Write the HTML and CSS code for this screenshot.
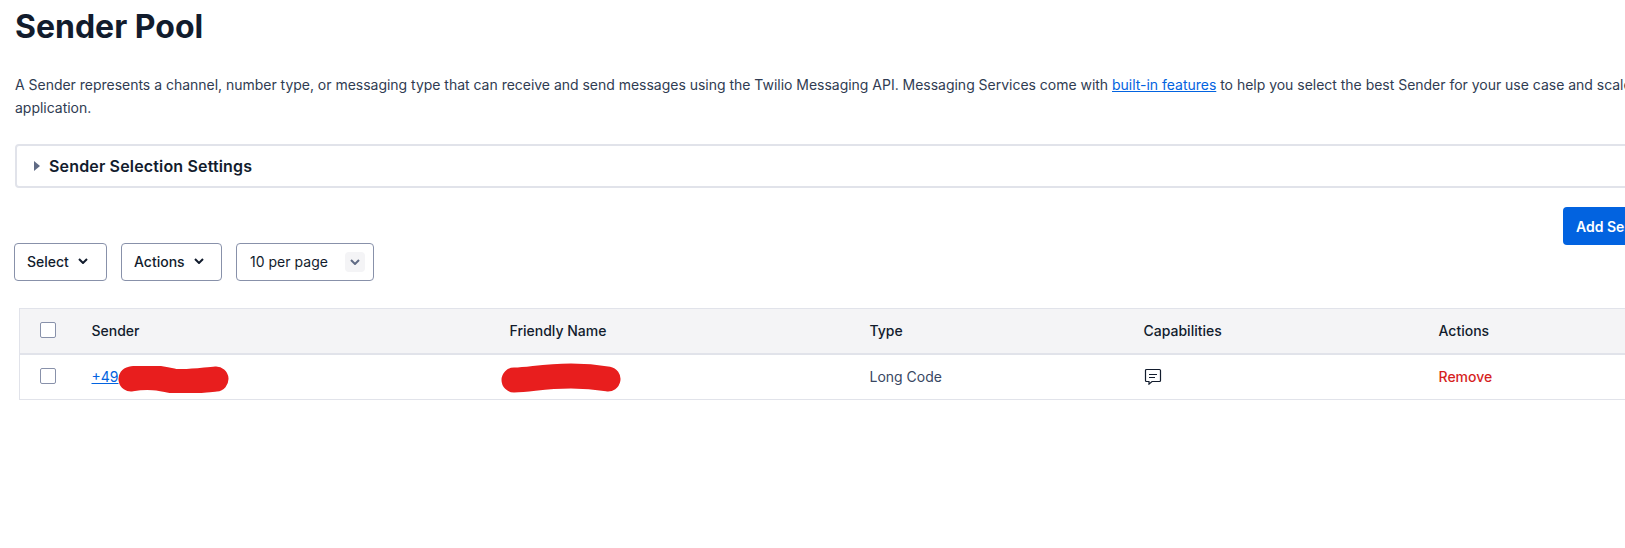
FILE: index.html
```html
<!DOCTYPE html>
<html lang="en">
<head>
<meta charset="utf-8">
<title>Sender Pool</title>
<link rel="stylesheet" href="styles.css">
</head>
<body>
<main class="page">
  <h1 class="title">Sender Pool</h1>
  <p class="intro">A Sender represents a channel, number type, or messaging type that can receive and send messages using the Twilio Messaging API. Messaging Services come with <a href="#" class="link">built-in features</a> to help you select the best Sender for your use case and scale your application.</p>
  <section class="disclosure">
    <svg class="disclosure-arrow" viewBox="0 0 6 10" aria-hidden="true"><path d="M0 0l6 5-6 5z"/></svg>
    <span class="disclosure-title">Sender Selection Settings</span>
  </section>
  <div class="add-row"><button class="primary">Add Sender</button></div>
  <div class="toolbar">
    <button class="menu select-menu">Select <svg class="chev" viewBox="0 0 10 6" aria-hidden="true"><path d="M1 1l4 4 4-4"/></svg></button>
    <button class="menu actions-menu">Actions <svg class="chev" viewBox="0 0 10 6" aria-hidden="true"><path d="M1 1l4 4 4-4"/></svg></button>
    <div class="per-page"><span class="per-page-label">10 per page</span><span class="caret-box"><svg class="chev muted" viewBox="0 0 10 6" aria-hidden="true"><path d="M1 1l4 4 4-4"/></svg></span></div>
  </div>
  <table class="table">
    <colgroup><col class="c1"><col class="c2"><col class="c3"><col class="c4"><col class="c5"><col></colgroup>
    <thead>
      <tr>
        <th><span class="check"></span></th>
        <th>Sender</th><th>Friendly Name</th><th>Type</th><th>Capabilities</th><th>Actions</th>
      </tr>
    </thead>
    <tbody>
      <tr>
        <td><span class="check"></span></td>
        <td class="redacted-cell"><a href="#" class="link">+49</a>
          <svg class="blob blob-one" viewBox="0 0 112 27" aria-hidden="true"><path d="M13 13C30 10 42 12 55 15C68 17 85 14 98 13" /></svg>
        </td>
        <td class="redacted-cell">
          <svg class="blob blob-two" viewBox="0 0 120 30" aria-hidden="true"><path d="M13 17C30 17 40 13 70 13C85 13 95 14 107 16" /></svg>
        </td>
        <td>Long Code</td>
        <td><svg class="msg" viewBox="0 0 18 18" aria-hidden="true"><path d="M2.5 2.5h13a1 1 0 0 1 1 1v10a1 1 0 0 1-1 1H8l-3 2.6v-2.6H2.5a1 1 0 0 1-1-1v-10a1 1 0 0 1 1-1z"/><path d="M5 7.5h8M5 10.5h6"/></svg></td>
        <td class="danger">Remove</td>
      </tr>
    </tbody>
  </table>
</main>
</body>
</html>
```

FILE: styles.css
```css
html, body {
  margin: 0;
  background: #fff;
  overflow: hidden;
}
body {
  width: 1625px;
  height: 548px;
  font-family: Inter, "Liberation Sans", sans-serif;
  color: #121c2d;
}
.page {
  width: 1960px;
  padding-left: 14px;
  box-sizing: border-box;
}
.title {
  margin: 7px 0 0 1px;
  font-size: 32px;
  line-height: 40px;
  font-weight: 700;
}
.intro {
  margin: 27px 0 0 1px;
  width: 1700px;
  font-size: 14px;
  line-height: 22.5px;
  letter-spacing: -0.019px;
  color: #303c52;
}
.link {
  color: #0263e0;
  text-decoration: underline;
}
.disclosure {
  margin: 25px 0 0 1px;
  height: 44px;
  box-sizing: border-box;
  border: 2px solid #e1e3ea;
  border-radius: 4px;
  display: flex;
  align-items: center;
  padding-left: 17px;
}
.disclosure-arrow {
  width: 6px;
  height: 10px;
  fill: #606b85;
  margin-right: 9px;
}
.disclosure-title {
  font-size: 16px;
  font-weight: 600;
  letter-spacing: 0.16px;
}
.add-row {
  margin-top: 19px;
  padding-left: 1549px;
  height: 38px;
}
.primary {
  height: 38px;
  width: 130px;
  border: 0;
  border-radius: 4px;
  background: #0263e0;
  color: #fff;
  font: 600 14px Inter, sans-serif;
  text-align: left;
  padding: 0 13px;
}
.toolbar {
  margin-top: -2px;
  display: flex;
  gap: 14px;
  height: 38px;
}
.menu, .per-page {
  height: 38px;
  box-sizing: border-box;
  border: 1px solid #8891aa;
  border-radius: 4px;
  background: #fff;
  color: #121c2d;
  font: 500 14px Inter, sans-serif;
  display: flex;
  align-items: center;
}
.menu {
  padding: 0 0 2px 12px;
  gap: 9px;
}
.select-menu { width: 93px; }
.actions-menu { width: 101px; }
.per-page {
  width: 138px;
  padding: 0 8px 0 13px;
  justify-content: space-between;
  font-weight: 400;
  letter-spacing: 0.02px;
}
.per-page-label { margin-bottom: 2px; }
.caret-box {
  width: 20px;
  height: 20px;
  border-radius: 4px;
  background: #f4f4f6;
  display: flex;
  align-items: center;
  justify-content: center;
}
.chev {
  width: 10px;
  height: 6px;
  fill: none;
  stroke: #121c2d;
  stroke-width: 2;
}
.chev.muted { stroke: #606b85; }
.table {
  margin: 27px 0 0 5px;
  width: 1900px;
  table-layout: fixed;
  border-collapse: collapse;
  font-size: 14px;
}
.c1 { width: 72px; }
.c2 { width: 418px; }
.c3 { width: 360px; }
.c4 { width: 274px; }
.c5 { width: 295px; }
.table th {
  height: 42px;
  padding: 0 0 2px;
  background: #f4f4f6;
  border-top: 1px solid #e1e3ea;
  border-bottom: 2px solid #e1e3ea;
  text-align: left;
  font-weight: 500;
  vertical-align: middle;
}
.table td {
  height: 42px;
  padding: 0 0 2px;
  border-bottom: 1px solid #e1e3ea;
  color: #394762;
  vertical-align: middle;
}
.table tr > :first-child {
  border-left: 1px solid #e1e3ea;
  padding-left: 20px;
}
.check {
  display: block;
  width: 16px;
  height: 16px;
  box-sizing: border-box;
  border: 1px solid #8891aa;
  border-radius: 2px;
  background: #fff;
}
.table .danger {
  color: #d61f1f;
  font-weight: 500;
}
.msg {
  display: block;
  width: 18px;
  height: 18px;
  fill: none;
  stroke: #121c2d;
  stroke-width: 1.2;
}
.redacted-cell { position: relative; }
.blob {
  position: absolute;
  fill: none;
  stroke: #e81e1e;
  stroke-width: 25;
  stroke-linecap: round;
  stroke-linejoin: round;
}
.blob-one {
  left: 26px;
  top: 11px;
  width: 112px;
  height: 27px;
}
.blob-two {
  left: -9px;
  top: 8px;
  width: 120px;
  height: 30px;
}
```
